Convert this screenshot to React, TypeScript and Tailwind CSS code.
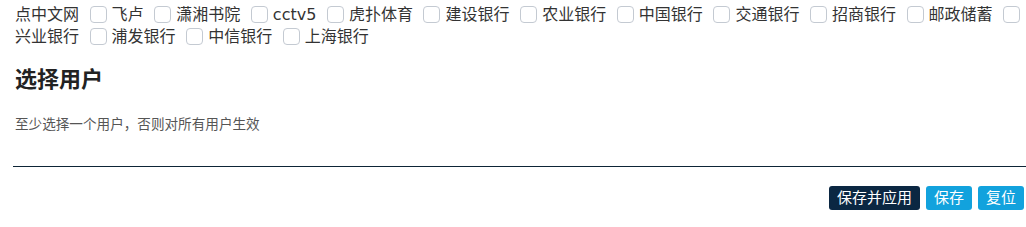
import React from 'react';

const sites = [
  '飞卢',
  '潇湘书院',
  'cctv5',
  '虎扑体育',
  '建设银行',
  '农业银行',
  '中国银行',
  '交通银行',
  '招商银行',
  '邮政储蓄',
  '兴业银行',
  '浦发银行',
  '中信银行',
  '上海银行',
];

const font = { fontFamily: '"DejaVu Sans", "Noto Sans CJK SC", sans-serif' };
const cjk = { fontFamily: '"Noto Sans CJK SC", sans-serif' };

const App: React.FC = () => {
  return (
    <div className="w-[1026px] h-[227px] overflow-hidden bg-white pl-[13px]" style={font}>
      {/* site checkboxes, continued from the row above */}
      <div className="pt-[4px] pl-[2px] text-[16px] leading-[22px] text-[#333]">
        <span className="whitespace-nowrap">点中文网</span>
        {sites.map((s) => (
          <React.Fragment key={s}>
            <span className="inline-block w-[17px] h-[17px] align-[-3px] ml-[10.5px] rounded-[4px] border border-[#c4cad2] bg-white" />{' '}
            <span className="whitespace-nowrap">{s}</span>
          </React.Fragment>
        ))}
      </div>

      <h2 className="mt-[17px] pl-[2px] text-[22px] leading-[30px] font-bold text-[#222]">选择用户</h2>
      <p
        className="mt-[18px] pl-[2px] text-[13.6px] leading-[20px] text-[#555] [text-spacing-trim:space-all]"
        style={cjk}
      >
        至少选择一个用户，否则对所有用户生效
      </p>

      <div className="mt-[33px] border-t border-[#0d2436]" />

      <div className="mt-[19px] mr-[2px] flex justify-end gap-[6px]">
        <button className="h-[24px] px-[8px] rounded-[3px] bg-[#0b2742] text-white text-[15px] leading-[24px]">
          保存并应用
        </button>
        <button className="h-[24px] px-[8px] rounded-[3px] bg-[#12a2dd] text-white text-[15px] leading-[24px]">
          保存
        </button>
        <button className="h-[24px] px-[8px] rounded-[3px] bg-[#12a2dd] text-white text-[15px] leading-[24px]">
          复位
        </button>
      </div>
    </div>
  );
};

export default App;
